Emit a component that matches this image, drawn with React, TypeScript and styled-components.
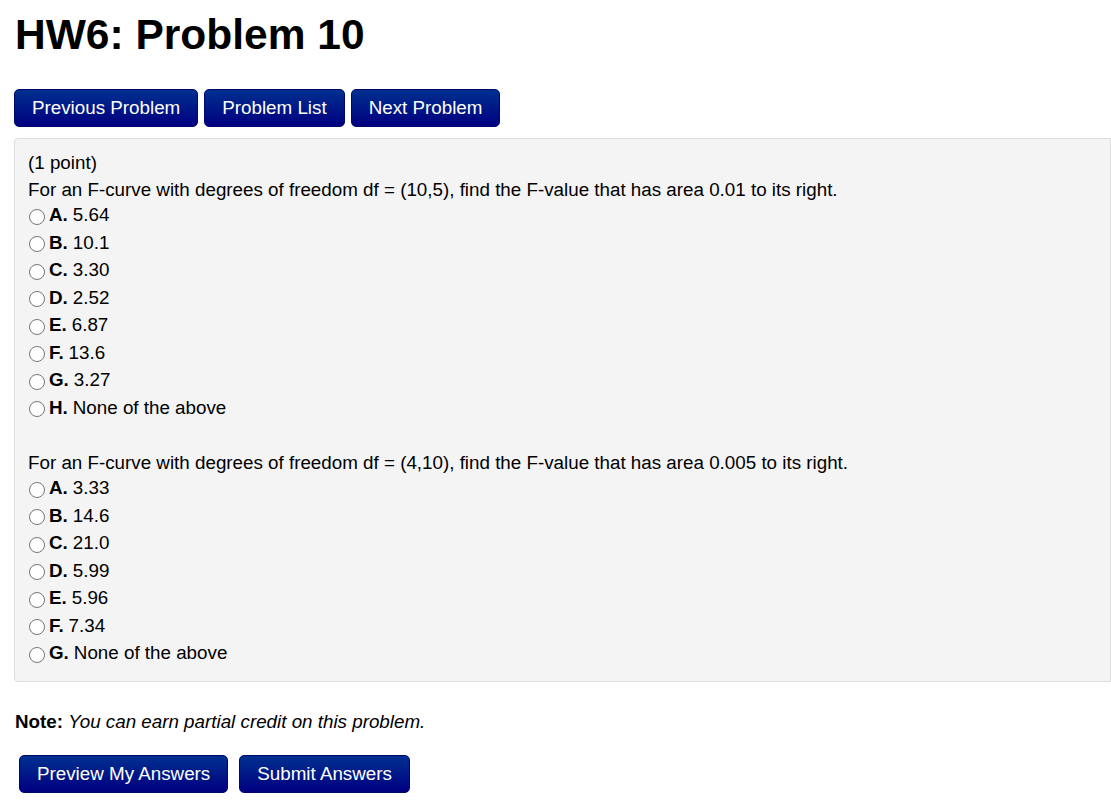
import React from 'react';
import styled, { createGlobalStyle } from 'styled-components';

const GlobalStyle = createGlobalStyle`
  body {
    margin: 0;
    background: #fff;
    font-family: 'Liberation Sans', Arial, sans-serif;
    color: #000;
  }
`;

const Page = styled.div`
  padding: 0 0 0 14px;
`;

const Title = styled.h1`
  margin: 0;
  padding: 10px 0 0 1px;
  height: 47px;
  font-size: 42.5px;
  line-height: 50px;
  font-weight: 700;
`;

const NavRow = styled.div<{ $top: number; $gap: number; $left: number }>`
  display: flex;
  gap: ${(p) => p.$gap}px;
  margin-top: ${(p) => p.$top}px;
  padding-left: ${(p) => p.$left}px;
`;

const Button = styled.button`
  height: 38px;
  padding: 0 17px;
  font-family: 'Liberation Sans', Arial, sans-serif;
  font-size: 18.8px;
  color: #fff;
  background: linear-gradient(to bottom, #00308f, #000080);
  border: 1px solid #00086b;
  border-radius: 5px;
  cursor: pointer;
`;

const Panel = styled.div`
  margin-top: 11px;
  padding: 10px 13px 12px 13px;
  background: #f4f4f4;
  border: 1px solid #dddddd;
  border-radius: 4px 0 0 4px;
  font-size: 18.8px;
  line-height: 27px;
`;

const Line = styled.div<{ $gap?: boolean }>`
  margin-top: ${(p) => (p.$gap ? '26px' : '0')};
`;

const Choice = styled.label`
  display: flex;
  align-items: center;
  box-sizing: border-box;
  height: 27.5px;
  padding-bottom: 3px;
  line-height: 22px;
`;

const Radio = styled.input.attrs({ type: 'radio' })`
  appearance: none;
  box-sizing: border-box;
  flex: none;
  width: 16px;
  height: 16px;
  margin: 3px 4px 0 1px;
  border: 1px solid #767676;
  border-radius: 50%;
  background: #fff;
`;

const Letter = styled.b`
  margin-right: 5px;
`;

const Note = styled.p`
  margin: 28px 0 0 1px;
  font-size: 18.8px;
  line-height: 24px;
  em {
    font-style: italic;
  }
`;

const q1 = [
  ['A', '5.64'],
  ['B', '10.1'],
  ['C', '3.30'],
  ['D', '2.52'],
  ['E', '6.87'],
  ['F', '13.6'],
  ['G', '3.27'],
  ['H', 'None of the above'],
];

const q2 = [
  ['A', '3.33'],
  ['B', '14.6'],
  ['C', '21.0'],
  ['D', '5.99'],
  ['E', '5.96'],
  ['F', '7.34'],
  ['G', 'None of the above'],
];

const Choices: React.FC<{ name: string; items: string[][] }> = ({ name, items }) => (
  <>
    {items.map(([l, v]) => (
      <Choice key={l}>
        <Radio name={name} />
        <Letter>{l}.</Letter>
        {v}
      </Choice>
    ))}
  </>
);

export default function App() {
  return (
    <Page>
      <GlobalStyle />
      <Title>HW6: Problem 10</Title>
      <NavRow $top={32} $gap={6} $left={0}>
        <Button>Previous Problem</Button>
        <Button>Problem List</Button>
        <Button>Next Problem</Button>
      </NavRow>
      <Panel>
        <Line>(1 point)</Line>
        <Line>
          For an F-curve with degrees of freedom df = (10,5), find the F-value that has area 0.01 to its right.
        </Line>
        <Choices name='q1' items={q1} />
        <Line $gap>
          For an F-curve with degrees of freedom df = (4,10), find the F-value that has area 0.005 to its right.
        </Line>
        <Choices name='q2' items={q2} />
      </Panel>
      <Note>
        <b>Note:</b> <em>You can earn partial credit on this problem.</em>
      </Note>
      <NavRow $top={21} $gap={11} $left={5}>
        <Button>Preview My Answers</Button>
        <Button>Submit Answers</Button>
      </NavRow>
    </Page>
  );
}
